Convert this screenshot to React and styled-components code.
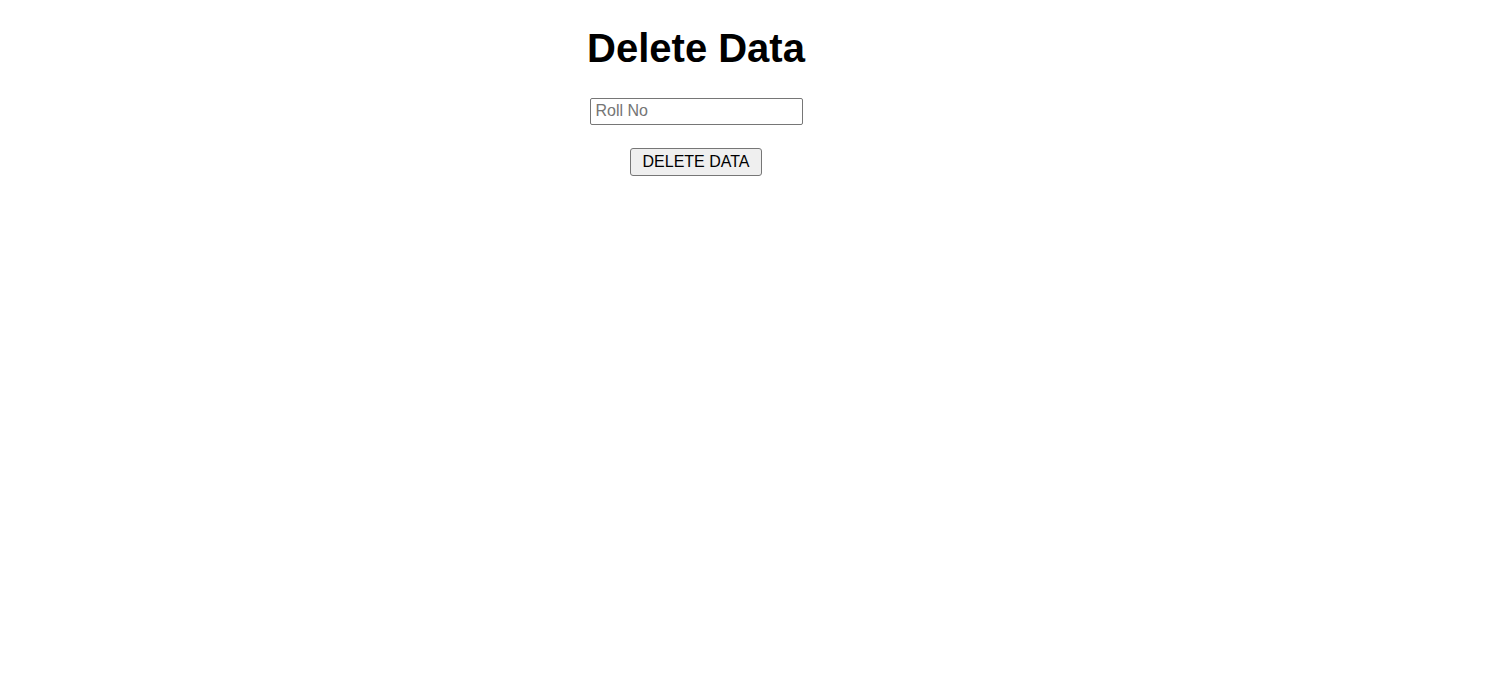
import React from "react";
import styled, { createGlobalStyle } from "styled-components";

const GlobalStyle = createGlobalStyle`
  html, body {
    margin: 0;
    padding: 0;
    background: #ffffff;
  }
  body {
    font-family: "Liberation Sans", Arial, sans-serif;
  }
`;

const Page = styled.main`
  width: 1392px;
  display: flex;
  flex-direction: column;
  align-items: center;
  padding-top: 25px;
  box-sizing: border-box;
`;

const Title = styled.h1`
  margin: 0;
  font-family: "Liberation Sans", Arial, sans-serif;
  font-size: 40px;
  line-height: 46px;
  font-weight: 700;
  color: #000;
`;

const Form = styled.form`
  display: flex;
  flex-direction: column;
  align-items: center;
  gap: 23px;
  margin-top: 27px;
`;

const Input = styled.input`
  box-sizing: border-box;
  width: 213px;
  height: 27px;
  padding: 0 4px 2px 5px;
  font-family: "Liberation Sans", Arial, sans-serif;
  font-size: 16px;
  color: #000;
  border: 1px solid #767676;
  border-radius: 2px;
  background: #fff;
  outline: none;

  &::placeholder {
    color: #757575;
  }
`;

const Button = styled.button`
  box-sizing: border-box;
  width: 132px;
  height: 28px;
  padding: 0 10px;
  font-family: "Liberation Sans", Arial, sans-serif;
  font-size: 16px;
  color: #000;
  background: #efefef;
  border: 1px solid #767676;
  border-radius: 3px;
  cursor: pointer;
`;

export default function App() {
  return (
    <>
      <GlobalStyle />
      <Page>
        <Title>Delete Data</Title>
        <Form onSubmit={(e) => e.preventDefault()}>
          <Input type="text" placeholder="Roll No" />
          <Button type="submit">DELETE DATA</Button>
        </Form>
      </Page>
    </>
  );
}
